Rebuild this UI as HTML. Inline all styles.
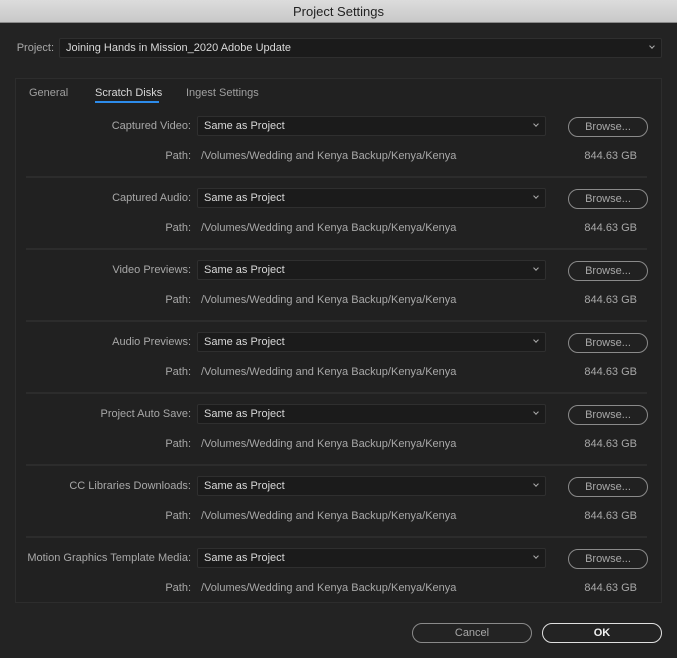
<!DOCTYPE html>
<html><head><style>
*{margin:0;padding:0;box-sizing:border-box}
body{width:677px;height:658px;background:#232323;font-family:"Liberation Sans",sans-serif;font-size:11px;color:#c8c8c8;position:relative;overflow:hidden}
.a{position:absolute}
.title{left:0;top:0;width:677px;height:23px;background:linear-gradient(#dcdcdc,#c8c8c8);border-bottom:1px solid #8a8a8a;color:#222;font-size:13px;text-align:center;line-height:24px}
.dd{background:#1b1b1b;border:1px solid #2f2f2f;border-radius:2px;color:#d8d8d8;padding-left:6px;line-height:18px}
.chev{position:absolute;right:7px;top:5px;width:4px;height:4px;border-right:1px solid #aaa;border-bottom:1px solid #aaa;transform:rotate(45deg)}
.lbl{text-align:right;color:#a8a8a8}
.btn{border:1.5px solid #8a8a8a;border-radius:10px;color:#a8a8a8;display:flex;align-items:center;justify-content:center}
.sep{left:26px;width:621px;height:2px;background:#2c2c2c}
</style></head><body>
<div class="a title">Project Settings</div>
<div class="a lbl" style="left:10px;top:42px;width:44px;color:#a8a8a8">Project:</div>
<div class="a dd" style="left:59px;top:38px;width:603px;height:20px">Joining Hands in Mission_2020 Adobe Update<div class="chev"></div></div>
<div class="a" style="left:15px;top:78px;width:647px;height:525px;border:1px solid #2d2d2d;background:#212121"></div>
<div class="a" style="left:29px;top:87px;color:#a0a0a0">General</div>
<div class="a" style="left:95px;top:87px;color:#d8d8d8">Scratch Disks</div>
<div class="a" style="left:95px;top:101px;width:64px;height:2px;background:#2d8ceb"></div>
<div class="a" style="left:186px;top:87px;color:#a0a0a0">Ingest Settings</div>
<div id="rows"></div>
<script>
var L=["Captured Video:","Captured Audio:","Video Previews:","Audio Previews:","Project Auto Save:","CC Libraries Downloads:","Motion Graphics Template Media:"];
var h="";
for(var i=0;i<7;i++){var y=116+72*i;
h+='<div class="a lbl" style="left:0;top:'+(y+4)+'px;width:191px">'+L[i]+'</div>';
h+='<div class="a dd" style="left:197px;top:'+y+'px;width:349px;height:20px">Same as Project<div class="chev"></div></div>';
h+='<div class="a btn" style="left:568px;top:'+(y+1)+'px;width:80px;height:20px">Browse...</div>';
h+='<div class="a lbl" style="left:0;top:'+(y+34)+'px;width:191px">Path:</div>';
h+='<div class="a" style="left:201px;top:'+(y+34)+'px;color:#a8a8a8">/Volumes/Wedding and Kenya Backup/Kenya/Kenya</div>';
h+='<div class="a" style="left:560px;top:'+(y+34)+'px;width:77px;text-align:right;color:#a8a8a8">844.63 GB</div>';
if(i<6)h+='<div class="a sep" style="top:'+(y+60)+'px"></div>';}
document.getElementById("rows").innerHTML=h;
</script>
<div class="a btn" style="left:412px;top:623px;width:120px;height:20px">Cancel</div>
<div class="a btn" style="left:542px;top:623px;width:120px;height:20px;border-color:#e0e0e0;color:#f0f0f0;font-weight:bold">OK</div>
</body></html>
